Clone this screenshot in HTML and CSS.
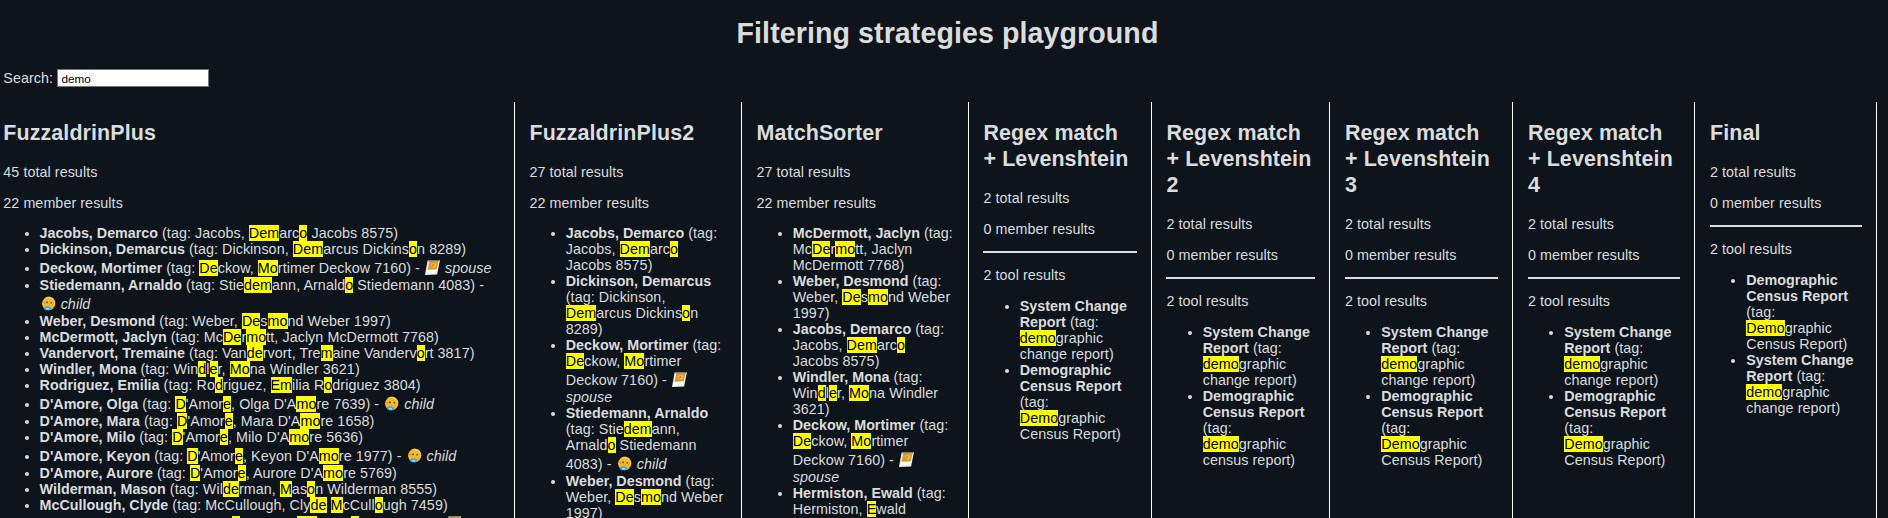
FILE: index.html
```html
<!DOCTYPE html>
<html lang="en">
<head>
    <meta charset="UTF-8">
    <meta name="viewport" content="width=device-width, initial-scale=1.0">
    <title>Filtering strategies playground</title>
    <link rel="stylesheet" href="styles.css">
</head>
<body>
    <svg class="defs" width="0" height="0" aria-hidden="true">
        <symbol id="baby" viewBox="0 0 17 20">
            <ellipse cx="8.7" cy="10.5" rx="6.6" ry="6.8" transform="rotate(28 8.7 10.5)" fill="#f5b72f"/>
            <path d="M5 4.7c2.5-1.6 6-1.4 8 .6 1.600 1.600 2.300 3.600 1.900 5.600-.9-2.600-2.400-4.400-4.900-5.400-1.800-.7-3.500-.9-5-.8z" fill="#f9cf52"/>
            <circle cx="4.200" cy="9.800" r="1" fill="#e8892b"/>
            <circle cx="7" cy="9.400" r=".8" fill="#3a2a1a"/>
            <circle cx="11.200" cy="9.800" r=".8" fill="#3a2a1a"/>
            <path d="M4.200 14.600c1.200-1.800 5.400-2 6.800-.2.500.9-.1 2.300-1.300 2.700-1.500.4-3.600.3-4.800-.4-.9-.5-1.100-1.400-.7-2.100z" fill="#3ba7e0"/>
            <ellipse cx="7.600" cy="15.700" rx="1.700" ry=".9" fill="#a9dcf5"/>
        </symbol>
        <symbol id="ring" viewBox="0 0 17 20">
            <path d="M3.600 3.600 16 3l-2.900 14.400-12.100.600z" fill="#f1efe9"/>
            <path d="M4.300 3.500 15.800 3l-1.100 1.400-9.900.400z" fill="#8a6a3c"/>
            <path d="M5.200 4.900 14.400 4.500 12.700 12.300 3.600 12.700z" fill="#d99a2b"/>
            <path d="M7.300 6.500l4.800-.3-.9 4.300-2.200.1-.5-1.500-1.600-.3z" fill="#f4c64a"/>
            <path d="M8.500 7.500l1.600-.1-.3 1.400-1.600.1z" fill="#a8651c"/>
            <path d="M3 13.600l9.500-.5-.6 2.800-9.900.6z" fill="#ffffff"/>
        </symbol>
    </svg>

    <h1 class="page-title">Filtering strategies playground</h1>

    <div class="search">
        <label for="search">Search:</label>
        <input type="text" id="search" value="demo">
    </div>

    <div class="columns">
        <section class="strategy">
            <h2>FuzzaldrinPlus</h2>
            <p>45 total results</p>
            <p>22 member results</p>
            <ul>
                <li><b>Jacobs, Demarco</b> (tag: Jacobs, <mark>Dem</mark>arc<mark>o</mark> Jacobs 8575)</li>
                <li><b>Dickinson, Demarcus</b> (tag: Dickinson, <mark>Dem</mark>arcus Dickins<mark>o</mark>n 8289)</li>
                <li><b>Deckow, Mortimer</b> (tag: <mark>De</mark>ckow, <mark>Mo</mark>rtimer Deckow 7160) - <svg class="emoji"><use href="#ring"/></svg> <i>spouse</i></li>
                <li><b>Stiedemann, Arnaldo</b> (tag: Stie<mark>dem</mark>ann, Arnald<mark>o</mark> Stiedemann 4083) - <svg class="emoji"><use href="#baby"/></svg> <i>child</i></li>
                <li><b>Weber, Desmond</b> (tag: Weber, <mark>De</mark>s<mark>mo</mark>nd Weber 1997)</li>
                <li><b>McDermott, Jaclyn</b> (tag: Mc<mark>De</mark>r<mark>mo</mark>tt, Jaclyn McDermott 7768)</li>
                <li><b>Vandervort, Tremaine</b> (tag: Van<mark>de</mark>rvort, Tre<mark>m</mark>aine Vanderv<mark>o</mark>rt 3817)</li>
                <li><b>Windler, Mona</b> (tag: Win<mark>d</mark>l<mark>e</mark>r, <mark>Mo</mark>na Windler 3621)</li>
                <li><b>Rodriguez, Emilia</b> (tag: Ro<mark>d</mark>riguez, <mark>Em</mark>ilia R<mark>o</mark>driguez 3804)</li>
                <li><b>D'Amore, Olga</b> (tag: <mark>D</mark>'Amor<mark>e</mark>, Olga D'A<mark>mo</mark>re 7639) - <svg class="emoji"><use href="#baby"/></svg> <i>child</i></li>
                <li><b>D'Amore, Mara</b> (tag: <mark>D</mark>'Amor<mark>e</mark>, Mara D'A<mark>mo</mark>re 1658)</li>
                <li><b>D'Amore, Milo</b> (tag: <mark>D</mark>'Amor<mark>e</mark>, Milo D'A<mark>mo</mark>re 5636)</li>
                <li><b>D'Amore, Keyon</b> (tag: <mark>D</mark>'Amor<mark>e</mark>, Keyon D'A<mark>mo</mark>re 1977) - <svg class="emoji"><use href="#baby"/></svg> <i>child</i></li>
                <li><b>D'Amore, Aurore</b> (tag: <mark>D</mark>'Amor<mark>e</mark>, Aurore D'A<mark>mo</mark>re 5769)</li>
                <li><b>Wilderman, Mason</b> (tag: Wil<mark>de</mark>rman, <mark>M</mark>as<mark>o</mark>n Wilderman 8555)</li>
                <li><b>McCullough, Clyde</b> (tag: McCullough, Cly<mark>de</mark> <mark>M</mark>cCull<mark>o</mark>ugh 7459)</li>
                <li><b>Goldner, Wilhemina</b> (tag: Gol<mark>d</mark>ner, Wilh<mark>em</mark>ina G<mark>o</mark>ldner 4412) - <svg class="emoji"><use href="#ring"/></svg> <i>spouse</i></li>
            </ul>
        </section>

        <section class="strategy">
            <h2>FuzzaldrinPlus2</h2>
            <p>27 total results</p>
            <p>22 member results</p>
            <ul>
                <li><b>Jacobs, Demarco</b> (tag: Jacobs, <mark>Dem</mark>arc<mark>o</mark> Jacobs 8575)</li>
                <li><b>Dickinson, Demarcus</b> (tag: Dickinson, <mark>Dem</mark>arcus Dickins<mark>o</mark>n 8289)</li>
                <li><b>Deckow, Mortimer</b> (tag: <mark>De</mark>ckow, <mark>Mo</mark>rtimer Deckow 7160) - <svg class="emoji"><use href="#ring"/></svg> <i>spouse</i></li>
                <li><b>Stiedemann, Arnaldo</b> (tag: Stie<mark>dem</mark>ann, Arnald<mark>o</mark> Stiedemann 4083) - <svg class="emoji"><use href="#baby"/></svg> <i>child</i></li>
                <li><b>Weber, Desmond</b> (tag: Weber, <mark>De</mark>s<mark>mo</mark>nd Weber 1997)</li>
            </ul>
        </section>

        <section class="strategy">
            <h2>MatchSorter</h2>
            <p>27 total results</p>
            <p>22 member results</p>
            <ul>
                <li><b>McDermott, Jaclyn</b> (tag: Mc<mark>De</mark>r<mark>mo</mark>tt, Jaclyn McDermott 7768)</li>
                <li><b>Weber, Desmond</b> (tag: Weber, <mark>De</mark>s<mark>mo</mark>nd Weber 1997)</li>
                <li><b>Jacobs, Demarco</b> (tag: Jacobs, <mark>Dem</mark>arc<mark>o</mark> Jacobs 8575)</li>
                <li><b>Windler, Mona</b> (tag: Win<mark>d</mark>l<mark>e</mark>r, <mark>Mo</mark>na Windler 3621)</li>
                <li><b>Deckow, Mortimer</b> (tag: <mark>De</mark>ckow, <mark>Mo</mark>rtimer Deckow 7160) - <svg class="emoji"><use href="#ring"/></svg> <i>spouse</i></li>
                <li><b>Hermiston, Ewald</b> (tag: Hermiston, <mark>E</mark>wald</li>
            </ul>
        </section>

        <section class="strategy">
            <h2>Regex match + Levenshtein</h2>
            <p>2 total results</p>
            <p>0 member results</p>
            <hr>
            <p>2 tool results</p>
            <ul>
                <li><b>System Change Report</b> (tag: <mark>demo</mark>graphic change report)</li>
                <li><b>Demographic Census Report</b> (tag: <mark>Demo</mark>graphic Census Report)</li>
            </ul>
        </section>

        <section class="strategy">
            <h2>Regex match + Levenshtein 2</h2>
            <p>2 total results</p>
            <p>0 member results</p>
            <hr>
            <p>2 tool results</p>
            <ul>
                <li><b>System Change Report</b> (tag: <mark>demo</mark>graphic change report)</li>
                <li><b>Demographic Census Report</b> (tag: <mark>demo</mark>graphic census report)</li>
            </ul>
        </section>

        <section class="strategy">
            <h2>Regex match + Levenshtein 3</h2>
            <p>2 total results</p>
            <p>0 member results</p>
            <hr>
            <p>2 tool results</p>
            <ul>
                <li><b>System Change Report</b> (tag: <mark>demo</mark>graphic change report)</li>
                <li><b>Demographic Census Report</b> (tag: <mark>Demo</mark>graphic Census Report)</li>
            </ul>
        </section>

        <section class="strategy">
            <h2>Regex match + Levenshtein 4</h2>
            <p>2 total results</p>
            <p>0 member results</p>
            <hr>
            <p>2 tool results</p>
            <ul>
                <li><b>System Change Report</b> (tag: <mark>demo</mark>graphic change report)</li>
                <li><b>Demographic Census Report</b> (tag: <mark>Demo</mark>graphic Census Report)</li>
            </ul>
        </section>

        <section class="strategy">
            <h2>Final</h2>
            <p>2 total results</p>
            <p>0 member results</p>
            <hr>
            <p>2 tool results</p>
            <ul>
                <li><b>Demographic Census Report</b> (tag: <mark>Demo</mark>graphic Census Report)</li>
                <li><b>System Change Report</b> (tag: <mark>demo</mark>graphic change report)</li>
            </ul>
        </section>
    </div>
</body>
</html>
```

FILE: styles.css
```css
html, body {
    height: 100%;
    overflow: hidden;
}
body {
    margin: 0;
    padding: 0 3.3px;
    background-color: #0d141c;
    color: #dcdcdc;
    font-family: "Liberation Sans", Arial, sans-serif;
    font-size: 14.3px;
    letter-spacing: 0.07px;
}
.defs {
    position: absolute;
}
.page-title {
    margin: 17px 0 0;
    padding-left: 7px;
    font-size: 28.6px;
    line-height: 33px;
    letter-spacing: 0.08px;
    text-align: center;
}
.search {
    display: flex;
    align-items: center;
    gap: 4.4px;
    margin-top: 19px;
}
.search input {
    box-sizing: border-box;
    width: 152px;
    height: 18px;
    padding: 1px 3px;
    border: 1px solid #767676;
    background: white;
    color: black;
    font-family: inherit;
    font-size: 11.7px;
}
.columns {
    display: grid;
    grid-template-columns: 511.5px 227px 227px 183px 178.5px 183px 182px 182px;
    margin-top: 15px;
}
.strategy {
    padding: 0 14.3px 0 14.7px;
    border-right: 1px solid white;
    min-height: 500px;
}
.strategy:first-child {
    padding-left: 0;
}
h2 {
    margin: 17.8px 0;
    font-size: 21.45px;
    line-height: 26px;
    letter-spacing: 0.1px;
}
p {
    margin: 14.3px 0;
    line-height: 16.7px;
}
hr {
    margin: 13.7px 0 14.3px;
    height: 0;
    border: none;
    border-top: 2px solid #dcdcdc;
}
p + hr {
    margin-top: -0.6px;
}
ul {
    margin: 13.6px 0;
    padding-left: 36.3px;
}
p + ul {
    margin-top: -0.7px;
}
b {
    letter-spacing: 0;
}
mark {
    background-color: yellow;
    color: black;
}
.emoji {
    width: 17px;
    height: 20px;
    vertical-align: -4px;
}
```
